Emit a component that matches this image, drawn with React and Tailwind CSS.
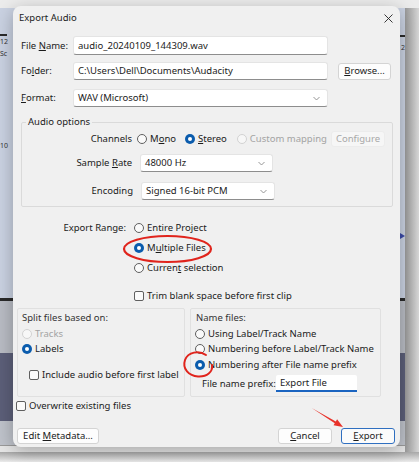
import clsx from 'clsx';

// Windows 11 style radio button
function Radio({ checked = false, disabled = false }) {
  if (checked) {
    return (
      <span className="w-[10px] h-[10px] rounded-full bg-[#0b5cad] flex items-center justify-center shrink-0">
        <span className="w-[4px] h-[4px] rounded-full bg-white" />
      </span>
    );
  }
  return (
    <span
      className={clsx(
        'w-[10px] h-[10px] rounded-full border shrink-0',
        disabled ? 'border-[#d2d2d2] bg-[#f7f7f7]' : 'border-[#5f5f5f] bg-[#fafafa]',
      )}
    />
  );
}

function Check() {
  return <span className="w-[10px] h-[10px] rounded-[2px] border border-[#5f5f5f] bg-[#fafafa] shrink-0" />;
}

function Option({ checked, disabled, children, className }) {
  return (
    <div className={clsx('flex items-center h-[14px] gap-[3px]', disabled && 'text-[#a3a3a3]', className)}>
      <Radio checked={checked} disabled={disabled} />
      <span>{children}</span>
    </div>
  );
}

function Field({ children, className }) {
  return (
    <div
      className={clsx(
        'flex items-center bg-white border border-[#e4e4e4] border-b-[#8d8d8d] rounded-[3px] px-[4px]',
        className,
      )}
    >
      {children}
    </div>
  );
}

function Chevron() {
  return (
    <svg width="7" height="5" viewBox="0 0 7 5" className="ml-auto mr-[3px]">
      <path d="M0.5 1 L3.5 4 L6.5 1" fill="none" stroke="#8a8a8a" strokeWidth="0.9" />
    </svg>
  );
}

function Select({ value, className }) {
  return (
    <Field className={className}>
      <span>{value}</span>
      <Chevron />
    </Field>
  );
}

function Button({ children, primary, disabled, className }) {
  return (
    <div
      className={clsx(
        'flex items-center justify-center h-[16px] rounded-[3px] border',
        primary && 'border-[#2f6fc0] bg-[#fbfbfb]',
        disabled && 'border-[#ececec] bg-[#f6f6f6] text-[#a8a8a8]',
        !primary && !disabled && 'border-[#d4d4d4] bg-[#fdfdfd]',
        className,
      )}
    >
      {children}
    </div>
  );
}

const U = ({ children }) => <span className="underline underline-offset-[1px]">{children}</span>;

function Backdrop() {
  return (
    <>
      {/* Audacity main window behind the dialog */}
      <div className="absolute left-0 top-[8px] w-[405px] h-[444px] flex flex-col bg-[#cad2e2]">
        <div className="h-[290px] relative">
          <div className="absolute left-0 top-[26px] w-[7px] h-[2px] bg-[#2a2a2a]" />
          <div className="absolute left-0 top-[30px] text-[7px] leading-none text-[#333]">12</div>
          <div className="absolute left-0 top-[42px] text-[7px] leading-none text-[#333]">Sc</div>
          <div className="absolute left-0 top-[134px] text-[7px] leading-none text-[#333]">10</div>
          <div className="absolute left-[400px] top-[27px] w-[5px] h-[2px] bg-[#2a2a2a]" />
          <div className="absolute left-[401px] top-[36px] text-[7px] leading-none text-[#333]">2</div>
          <div className="absolute left-[400px] top-[225px] w-0 h-0 border-y-[3px] border-y-transparent border-l-[5px] border-l-[#3b4aa8]" />
        </div>
        <div className="h-[3px] bg-[#2a2a2a]" />
        <div className="h-[52px] bg-[#b9bcc4]" />
        <div className="h-[68px] bg-[#5c5f79]" />
        <div className="h-[24px] bg-[#bfc3cb]" />
        <div className="flex-1 bg-[#e6e6e6] border-t border-[#9a9a9a] relative">
          <div className="absolute left-[405px] -top-[10px] text-[12px] font-bold text-[#2b3f93]">s</div>
        </div>
      </div>
      {/* drop shadow of the main window */}
      <div className="absolute left-[405px] top-[8px] w-[14px] h-[446px] bg-gradient-to-r from-[#9a9a9a] to-[#d6d6d6]" />
      <div className="absolute left-0 top-[452px] w-[419px] h-[10px] bg-gradient-to-b from-[#a8a8a8] to-[#ececec]" />
    </>
  );
}

export default function App() {
  return (
    <div className="relative w-[419px] h-[462px] overflow-hidden bg-[#ececec] font-['Noto_Sans',sans-serif] text-[9.5px] leading-none text-[#1b1b1b]">
      <Backdrop />

      <div className="absolute left-[13px] top-[6px] w-[387px] h-[441px] bg-[#f0f0f0] rounded-[8px] shadow-[0_4px_18px_rgba(0,0,0,0.28)] flex flex-col">
        {/* title bar */}
        <div className="h-[24px] flex items-center pl-[6px] pr-[7px]">
          <span>Export Audio</span>
          <svg width="9" height="9" viewBox="0 0 9 9" className="ml-auto">
            <path d="M0.5 0.5 L8.5 8.5 M8.5 0.5 L0.5 8.5" stroke="#222" strokeWidth="0.9" />
          </svg>
        </div>

        <div className="flex items-center h-[19px] mt-[6px] pl-[8px]">
          <span className="w-[52px]">File <U>N</U>ame:</span>
          <Field className="w-[255px] h-[19px]">audio_20240109_144309.wav</Field>
        </div>
        <div className="flex items-center h-[18px] mt-[7px] pl-[8px]">
          <span className="w-[52px]">Fo<U>l</U>der:</span>
          <Field className="w-[255px] h-[18px]">C:\Users\Dell\Documents\Audacity</Field>
          <Button className="w-[53px] ml-[10px] h-[17px]">
            <span><U>B</U>rowse...</span>
          </Button>
        </div>
        <div className="flex items-center h-[18px] mt-[9px] pl-[8px]">
          <span className="w-[52px]"><U>F</U>ormat:</span>
          <Select value="WAV (Microsoft)" className="w-[255px] h-[18px]" />
        </div>

        <fieldset className="ml-[8px] mt-[9px] w-[372px] border border-[#dadada] rounded-[2px] pb-[6px]">
          <legend className="ml-[4px] px-[2px] h-[12px] leading-[12px]">Audio options</legend>
          <div className="flex items-center h-[14px] mt-[4px]">
            <span className="w-[110px] text-right">Channels</span>
            <Option className="ml-[5px]">M<U>o</U>no</Option>
            <Option checked className="ml-[9px]"><U>S</U>tereo</Option>
            <Option disabled className="ml-[10px]">Custom mapping</Option>
            <Button disabled className="w-[54px] h-[14px] ml-auto mr-[7px]">Configure</Button>
          </div>
          <div className="flex items-center h-[18px] mt-[8px]">
            <span className="w-[110px] text-right">Sample <U>R</U>ate</span>
            <Select value="48000 Hz" className="w-[133px] h-[18px] ml-[8px]" />
          </div>
          <div className="flex items-center h-[18px] mt-[10px]">
            <span className="w-[111px] text-right">Encoding</span>
            <Select value="Signed 16-bit PCM" className="w-[134px] h-[18px] ml-[8px]" />
          </div>
        </fieldset>

        {/* export range */}
        <div className="flex mt-[14px]">
          <span className="w-[113px] h-[14px] flex items-center justify-end">Export Range:</span>
          <div className="flex flex-col gap-[6px] ml-[8px]">
            <Option>Entire Project</Option>
            <Option checked>M<U>u</U>ltiple Files</Option>
            <Option>Curren<U>t</U> selection</Option>
          </div>
        </div>
        <div className="flex items-center gap-[3px] h-[14px] mt-[14px] ml-[121px]">
          <Check />
          <span>Trim blank space before first clip</span>
        </div>

        <div className="flex gap-[5px] mt-[5px] ml-[4px] h-[89px]">
          <div className="w-[168px] border border-[#e0e0e0] rounded-[2px] pt-[3px] pl-[4px] flex flex-col">
            <span className="h-[12px] flex items-center text-[#333]">Split files based on:</span>
            <Option disabled className="mt-[3px]">Tracks</Option>
            <Option checked className="mt-[1px]">Labels</Option>
            <div className="flex items-center gap-[3px] h-[14px] mt-[12px] ml-[7px]">
              <Check />
              <span>Include audio before first label</span>
            </div>
          </div>
          <div className="w-[191px] border border-[#e0e0e0] rounded-[2px] pt-[3px] pl-[4px] flex flex-col">
            <span className="h-[12px] flex items-center ml-[1px] text-[#333]">Name files:</span>
            <Option className="mt-[3px]">Using Label/Track Name</Option>
            <Option className="mt-[1px]">Numbering before Label/Track Name</Option>
            <Option checked className="mt-[2px]">Numbering after File name prefix</Option>
            <div className="flex items-center h-[17px] mt-[3px] ml-[7px]">
              <span className="w-[74px]">File name prefix:</span>
              <div className="w-[81px] h-[17px] bg-white border-b-2 border-[#1a64c0] rounded-t-[2px] flex items-center px-[4px]">
                Export File
              </div>
            </div>
          </div>
        </div>

        <div className="flex items-center gap-[3px] h-[14px] mt-[2px] ml-[3px]">
          <Check />
          <span>Overwrite existing files</span>
        </div>

        <div className="flex items-center mt-[15px] px-[4px] pr-[5px]">
          <Button className="w-[82px]">
            <span>Edit <U>M</U>etadata...</span>
          </Button>
          <Button className="w-[54px] ml-auto">
            <span><U>C</U>ancel</span>
          </Button>
          <Button primary className="w-[54px] ml-[9px]">
            <span><U>E</U>xport</span>
          </Button>
        </div>

        {/* red hand-drawn annotations */}
        <svg className="absolute inset-0 pointer-events-none" width="387" height="441" viewBox="0 0 387 441">
          <ellipse cx="154.5" cy="243" rx="43.5" ry="13" fill="none" stroke="#e0241c" strokeWidth="2.2" />
          <path
            d="M193 349 C186 344 175 346 172 354 C169 363 176 370 185 370.5 C194 371 200 366 199 359"
            fill="none"
            stroke="#e0241c"
            strokeWidth="2"
            strokeLinecap="round"
          />
          <polygon points="298.7,402 322.8,415.4 324.1,413.3 330,421 320.5,419.3 321.8,417.2" fill="#e8322a" />
        </svg>
      </div>
    </div>
  );
}
